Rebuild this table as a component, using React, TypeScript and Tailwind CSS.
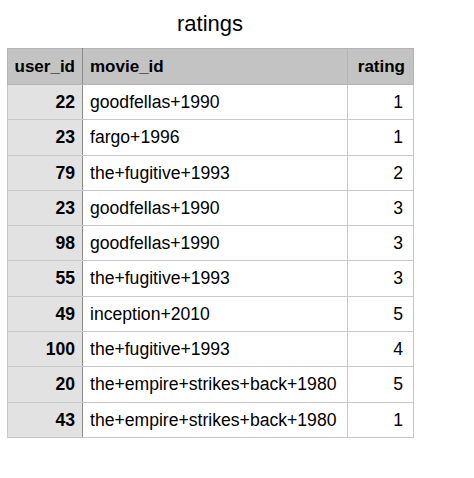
const rows: [number, string, number][] = [
  [22, 'goodfellas+1990', 1],
  [23, 'fargo+1996', 1],
  [79, 'the+fugitive+1993', 2],
  [23, 'goodfellas+1990', 3],
  [98, 'goodfellas+1990', 3],
  [55, 'the+fugitive+1993', 3],
  [49, 'inception+2010', 5],
  [100, 'the+fugitive+1993', 4],
  [20, 'the+empire+strikes+back+1980', 5],
  [43, 'the+empire+strikes+back+1980', 1],
];

export default function App() {
  return (
    <div className="h-[478px] w-[474px] bg-white font-['Liberation_Sans',Arial,sans-serif] text-black">
      <h1 className="pt-[11px] pl-[7px] w-[413px] text-center text-[22px] leading-[26px]">
        ratings
      </h1>
      <table className="mt-[11px] ml-[7px] w-[406px] table-fixed border-collapse text-[17.6px]">
        <thead>
          <tr className="h-[36px] bg-[#c3c3c3] text-[17px] font-bold">
            <th className="w-[75px] border border-[#b4b4b4] border-r-[#8a8a8a] pr-[7px] text-right whitespace-nowrap">
              user_id
            </th>
            <th className="w-[265px] border border-[#b4b4b4] px-[7px] text-left">movie_id</th>
            <th className="w-[66px] border border-[#b4b4b4] pr-[8px] text-right">rating</th>
          </tr>
        </thead>
        <tbody>
          {rows.map(([user, movie, rating], i) => (
            <tr key={i} className="h-[35.3px]">
              <td className="border border-[#c8c8c8] border-r-[#8a8a8a] bg-[#e2e2e2] pr-[7px] text-right font-bold">
                {user}
              </td>
              <td className="border border-[#c8c8c8] pl-[7px] text-left whitespace-nowrap">
                {movie}
              </td>
              <td className="border border-[#c8c8c8] pr-[10px] text-right">{rating}</td>
            </tr>
          ))}
        </tbody>
      </table>
    </div>
  );
}
